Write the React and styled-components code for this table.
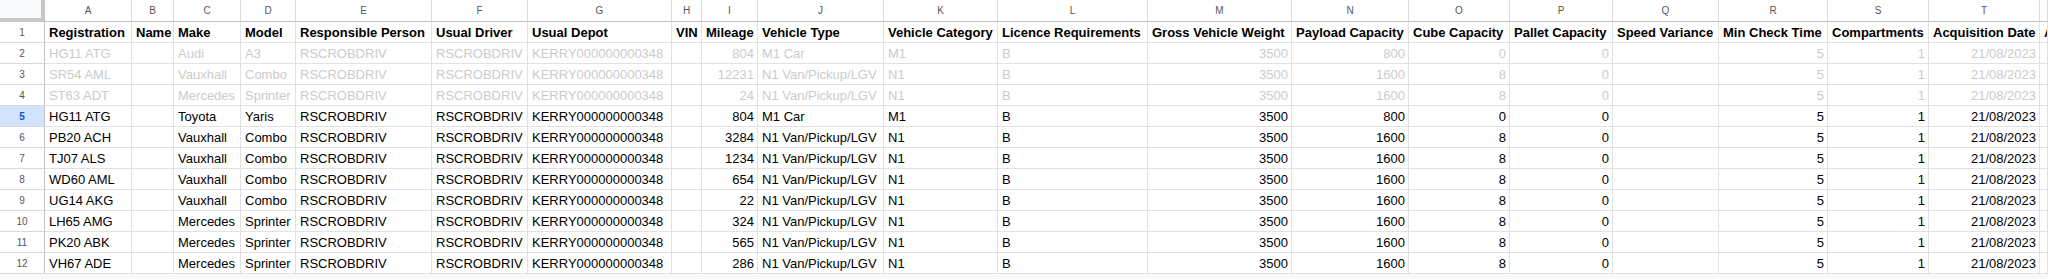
import React from "react";
import styled, { createGlobalStyle, css } from "styled-components";

const GlobalStyle = createGlobalStyle`
  html, body {
    margin: 0;
    padding: 0;
    background: #f8f9fa;
    overflow: hidden;
  }
  body {
    font-family: "Liberation Sans", Arial, sans-serif;
  }
`;

const COLS = [
  { letter: "A", width: 87, title: "Registration" },
  { letter: "B", width: 42, title: "Name" },
  { letter: "C", width: 67, title: "Make" },
  { letter: "D", width: 55, title: "Model" },
  { letter: "E", width: 136, title: "Responsible Person" },
  { letter: "F", width: 96, title: "Usual Driver" },
  { letter: "G", width: 144, title: "Usual Depot" },
  { letter: "H", width: 30, title: "VIN" },
  { letter: "I", width: 56, title: "Mileage", num: true },
  { letter: "J", width: 126, title: "Vehicle Type" },
  { letter: "K", width: 114, title: "Vehicle Category" },
  { letter: "L", width: 150, title: "Licence Requirements" },
  { letter: "M", width: 144, title: "Gross Vehicle Weight", num: true },
  { letter: "N", width: 117, title: "Payload Capacity", num: true },
  { letter: "O", width: 101, title: "Cube Capacity", num: true },
  { letter: "P", width: 103, title: "Pallet Capacity", num: true },
  { letter: "Q", width: 106, title: "Speed Variance", num: true },
  { letter: "R", width: 109, title: "Min Check Time", num: true },
  { letter: "S", width: 101, title: "Compartments", num: true },
  { letter: "T", width: 111, title: "Acquisition Date", num: true },
  { letter: "", width: 8, title: "A", num: false },
];

const ROWS = [
  ["HG11 ATG", "", "Audi", "A3", "M1 Car", "M1", "804", "800", "0"],
  ["SR54 AML", "", "Vauxhall", "Combo", "N1 Van/Pickup/LGV", "N1", "12231", "1600", "8"],
  ["ST63 ADT", "", "Mercedes", "Sprinter", "N1 Van/Pickup/LGV", "N1", "24", "1600", "8"],
  ["HG11 ATG", "", "Toyota", "Yaris", "M1 Car", "M1", "804", "800", "0"],
  ["PB20 ACH", "", "Vauxhall", "Combo", "N1 Van/Pickup/LGV", "N1", "3284", "1600", "8"],
  ["TJ07 ALS", "", "Vauxhall", "Combo", "N1 Van/Pickup/LGV", "N1", "1234", "1600", "8"],
  ["WD60 AML", "", "Vauxhall", "Combo", "N1 Van/Pickup/LGV", "N1", "654", "1600", "8"],
  ["UG14 AKG", "", "Vauxhall", "Combo", "N1 Van/Pickup/LGV", "N1", "22", "1600", "8"],
  ["LH65 AMG", "", "Mercedes", "Sprinter", "N1 Van/Pickup/LGV", "N1", "324", "1600", "8"],
  ["PK20 ABK", "", "Mercedes", "Sprinter", "N1 Van/Pickup/LGV", "N1", "565", "1600", "8"],
  ["VH67 ADE", "", "Mercedes", "Sprinter", "N1 Van/Pickup/LGV", "N1", "286", "1600", "8"],
].map(([reg, name, make, model, type, cat, mileage, payload, cube]) => [
  reg,
  name,
  make,
  model,
  "RSCROBDRIV",
  "RSCROBDRIV",
  "KERRY000000000348",
  "",
  mileage,
  type,
  cat,
  "B",
  "3500",
  payload,
  cube,
  "0",
  "",
  "5",
  "1",
  "21/08/2023",
  "",
]);

const FADED_ROWS = 3;
const ACTIVE_ROW = 5;

const Sheet = styled.div`
  display: grid;
  grid-template-columns: 45px ${COLS.map((c) => `${c.width}px`).join(" ")};
  grid-template-rows: 22px repeat(${ROWS.length + 1}, 21px);
  width: max-content;
  background: #ffffff;
  font-family: "Liberation Sans", Arial, sans-serif;
`;

const Corner = styled.div`
  box-sizing: border-box;
  background: #f8f9fa;
  border-right: 4px solid #c7c7c7;
  border-bottom: 4px solid #c7c7c7;
`;

const ColHeader = styled.div`
  box-sizing: border-box;
  display: flex;
  align-items: center;
  justify-content: center;
  border-right: 1px solid #dadada;
  border-bottom: 1px solid #c4c4c4;
  font-size: 10px;
  color: #575757;
  background: #ffffff;
  overflow: hidden;
`;

const RowHeader = styled.div`
  box-sizing: border-box;
  display: flex;
  align-items: center;
  justify-content: center;
  border-right: 1px solid #c4c4c4;
  border-bottom: 1px solid #dadada;
  font-size: 10px;
  color: #575757;
  background: #ffffff;
  ${(p) =>
    p.$active &&
    css`
      background: #d3e3fd;
      color: #0b57d0;
      font-weight: bold;
    `}
`;

const Cell = styled.div`
  box-sizing: border-box;
  display: flex;
  align-items: flex-end;
  justify-content: ${(p) => (p.$num ? "flex-end" : "flex-start")};
  padding: 0 3px 2px 4px;
  border-right: 1px solid #e2e2e2;
  border-bottom: 1px solid #e2e2e2;
  font-size: 13px;
  line-height: 15px;
  white-space: nowrap;
  overflow: hidden;
  color: ${(p) => (p.$faded ? "#cbcbcb" : "#000000")};
  font-weight: ${(p) => (p.$bold ? "bold" : "normal")};
`;

export default function App() {
  return (
    <>
      <GlobalStyle />
      <Sheet>
        <Corner />
        {COLS.map((c, k) => (
          <ColHeader key={k}>{c.letter}</ColHeader>
        ))}

        <RowHeader>1</RowHeader>
        {COLS.map((c, k) => (
          <Cell key={k} $bold>
            {c.title}
          </Cell>
        ))}

        {ROWS.map((row, i) => {
          const rowNum = i + 2;
          return (
            <React.Fragment key={rowNum}>
              <RowHeader $active={rowNum === ACTIVE_ROW}>{rowNum}</RowHeader>
              {row.map((v, j) => (
                <Cell key={j} $num={COLS[j].num} $faded={i < FADED_ROWS}>
                  {v}
                </Cell>
              ))}
            </React.Fragment>
          );
        })}
      </Sheet>
    </>
  );
}
